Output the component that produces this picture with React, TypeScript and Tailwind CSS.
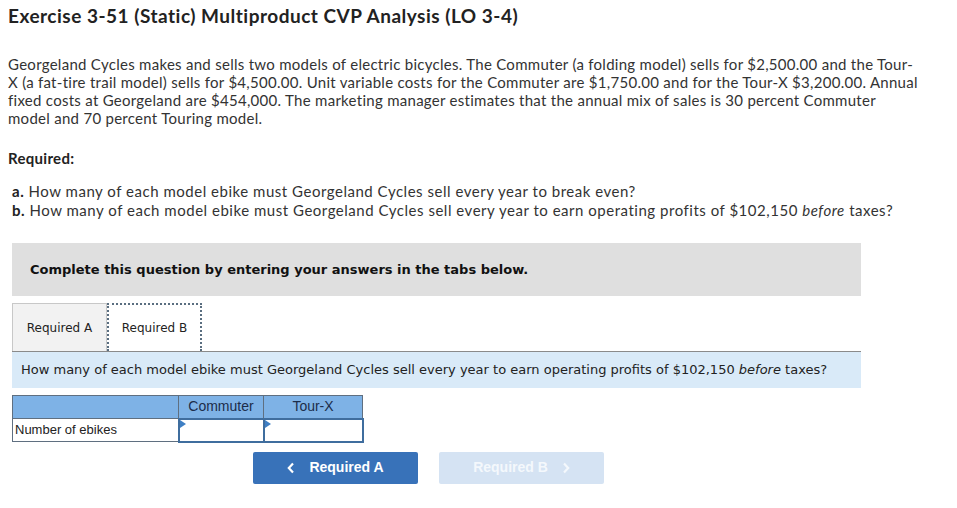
import React from "react";

const body = { fontFamily: '"Lato", "Open Sans", sans-serif' };
const verdana = { fontFamily: '"DejaVu Sans", Verdana, sans-serif' };
const arial = { fontFamily: '"Liberation Sans", Arial, sans-serif' };

const InputCell: React.FC = () => (
  <td className="relative h-[23px] border-2 border-[#3f6d9e] bg-white p-0">
    <span className="absolute left-0 top-0 h-0 w-0 border-y-[4px] border-l-[6px] border-y-transparent border-l-[#3f7fc4]" />
  </td>
);

export default function App() {
  return (
    <div className="min-h-[508px] w-[957px] bg-white text-[#333]" style={body}>
      <div className="px-2 pt-[5px]">
        <h1 className="text-[19px] font-bold leading-[22px] tracking-[0.5px] text-[#222]">
          Exercise 3-51 (Static) Multiproduct CVP Analysis (LO 3-4)
        </h1>

        <div className="mt-[28px] whitespace-nowrap text-[15px] leading-[18px] tracking-[0.28px] text-[#333]">
          <div>
            Georgeland Cycles makes and sells two models of electric bicycles. The Commuter (a folding model) sells for $2,500.00 and the Tour-
          </div>
          <div>
            X (a fat-tire trail model) sells for $4,500.00. Unit variable costs for the Commuter are $1,750.00 and for the Tour-X $3,200.00. Annual
          </div>
          <div>
            fixed costs at Georgeland are $454,000. The marketing manager estimates that the annual mix of sales is 30 percent Commuter
          </div>
          <div>model and 70 percent Touring model.</div>
        </div>

        <p className="mt-[22px] text-[15px] font-bold leading-[18px] tracking-[0.3px] text-[#222]">Required:</p>

        <div className="mt-[15px] whitespace-nowrap pl-1 text-[15px] leading-[19px] tracking-[0.52px] text-[#333]">
          <div>
            <b className="text-[#222]">a.</b> How many of each model ebike must Georgeland Cycles sell every year to break even?
          </div>
          <div>
            <b className="text-[#222]">b.</b> How many of each model ebike must Georgeland Cycles sell every year to earn operating profits of $102,150{" "}
            <i>before</i> taxes?
          </div>
        </div>
      </div>

      <div className="ml-3 mt-[23px] w-[849px]">
        <div className="flex h-[53px] items-center bg-[#dfdfdf] pl-[18px]" style={verdana}>
          <span className="text-[13px] font-bold text-[#111]">
            Complete this question by entering your answers in the tabs below.
          </span>
        </div>

        <div className="mt-[7px] flex h-[48px] items-stretch" style={verdana}>
          <div className="flex w-[95px] items-center justify-center border border-b-0 border-[#c8c8c8] bg-[#f2f2f2] text-[12px] text-[#222]">
            Required A
          </div>
          <div className="flex w-[95px] items-center justify-center border-2 border-b-0 border-dotted border-[#5a6e80] bg-white text-[12px] text-[#222]">
            Required B
          </div>
        </div>

        <div
          className="flex h-[37px] items-center border-t border-[#8a8a8a] bg-[#d9eaf8] pl-[9px] text-[13px] text-[#222]"
          style={verdana}
        >
          <span>
            How many of each model ebike must Georgeland Cycles sell every year to earn operating profits of $102,150 <i>before</i> taxes?
          </span>
        </div>

        <table className="mt-[7px] border-collapse text-[13px]" style={arial}>
          <thead>
            <tr className="h-[23px] bg-[#7eb2e6] text-[14px] text-[#1c2d4a]">
              <th className="w-[166px] border border-[#5f6f80]" />
              <th className="w-[85px] border border-[#5f6f80] font-normal">Commuter</th>
              <th className="w-[99px] border border-[#5f6f80] font-normal">Tour-X</th>
            </tr>
          </thead>
          <tbody>
            <tr className="h-[23px]">
              <td className="border border-[#5f6f80] pl-[2px] text-left text-[#222]">Number of ebikes</td>
              <InputCell />
              <InputCell />
            </tr>
          </tbody>
        </table>

        <div className="mt-[9px] flex gap-[21px] pl-[241px]" style={arial}>
          <button className="flex h-[32px] w-[165px] items-center justify-center gap-[14px] rounded-[2px] bg-[#3872b9] text-[14px] font-bold text-white">
            <svg width="8" height="12" viewBox="0 0 8 12" fill="none">
              <path d="M6 1.5 L1.8 6 L6 10.5" stroke="white" strokeWidth="2.2" />
            </svg>
            <span>Required A</span>
          </button>
          <button className="flex h-[32px] w-[165px] items-center justify-center gap-[14px] rounded-[2px] bg-[#d5e3f3] text-[14px] font-bold text-[#f4f8fc]">
            <span>Required B</span>
            <svg width="8" height="12" viewBox="0 0 8 12" fill="none">
              <path d="M2 1.5 L6.2 6 L2 10.5" stroke="#f4f8fc" strokeWidth="2.2" />
            </svg>
          </button>
        </div>
      </div>
    </div>
  );
}
